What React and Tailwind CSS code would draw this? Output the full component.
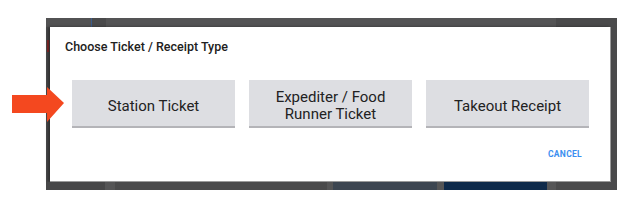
import React from "react";

function Seg({ w, c }) {
  return <div className={`h-full ${w} ${c}`} />;
}

export default function App() {
  return (
    <div className="relative w-[630px] h-[206px] bg-white overflow-hidden" style={{ fontFamily: "Roboto, 'Liberation Sans', sans-serif" }}>
      <div className="pt-[18px] pl-[46px]">
        <div className="flex flex-col w-[571px] h-[172px] bg-[#4a4a4b]">
          {/* top strip of the underlying screen */}
          <div className="flex h-[9px]">
            <Seg w="w-[45px]" c="bg-[#525253]" />
            <Seg w="w-[1px]" c="bg-[#3b5b8a]" />
            <Seg w="w-[14px]" c="bg-[#4a4a4b]" />
            <Seg w="w-[450px]" c="bg-[#545455]" />
            <Seg w="w-[61px]" c="bg-[#4a4a4b]" />
          </div>
          <div className="flex">
            <div className="w-[4px] pt-[13px]">
              <div className="h-[12px] w-[3px] border-r-2 border-[#8a2a2a]" />
            </div>
            <div className="flex flex-col w-[561px] h-[155px] bg-white border-r border-b border-[#9a9a9a] shadow-[-2px_0_3px_rgba(0,0,0,0.4)]">
              <div className="pt-[13px] pl-[15px] text-[12.5px] font-medium text-[#212121] leading-[14px]">
                Choose Ticket / Receipt Type
              </div>
              <div className="flex gap-[14px] pl-[22px] pt-[26px]">
                <button className="w-[163px] h-[48px] pt-[6px] bg-[#dddee2] border-b-2 border-[#b4b4b8] text-[15px] text-[#222] leading-[17px]">
                  Station Ticket
                </button>
                <button className="w-[163px] h-[48px] pt-[6px] bg-[#dddee2] border-b-2 border-[#b4b4b8] text-[15px] text-[#222] leading-[17px]">
                  Expediter / Food
                  <br />
                  Runner Ticket
                </button>
                <button className="w-[163px] h-[48px] pt-[6px] bg-[#dddee2] border-b-2 border-[#b4b4b8] text-[15px] text-[#222] leading-[17px]">
                  Takeout Receipt
                </button>
              </div>
              <div className="flex justify-end pr-[28px] pt-[21px]">
                <span className="text-[8.5px] font-bold text-[#3b8ef0] tracking-[0.3px] leading-[10px]">CANCEL</span>
              </div>
            </div>
            <div className="w-[6px]" />
          </div>
          {/* bottom strip of the underlying screen */}
          <div className="flex h-[8px]">
            <Seg w="w-[59px]" c="bg-[#474748]" />
            <Seg w="w-[10px]" c="bg-[#555556]" />
            <Seg w="w-[212px]" c="bg-[#4a4a4b]" />
            <Seg w="w-[6px]" c="bg-[#555556]" />
            <Seg w="w-[104px]" c="bg-[#3d4651]" />
            <Seg w="w-[7px]" c="bg-[#555556]" />
            <Seg w="w-[103px]" c="bg-[#0f2a4a]" />
            <Seg w="w-[9px]" c="bg-[#555556]" />
            <Seg w="w-[61px]" c="bg-[#4a4a4b]" />
          </div>
        </div>
      </div>
      <svg className="absolute left-[12px] top-[87px]" width="53" height="36" viewBox="0 0 53 36">
        <polygon points="0,8 35,8 35,0 52,16 35,35 35,26 0,26" fill="#f4481f" />
      </svg>
    </div>
  );
}
